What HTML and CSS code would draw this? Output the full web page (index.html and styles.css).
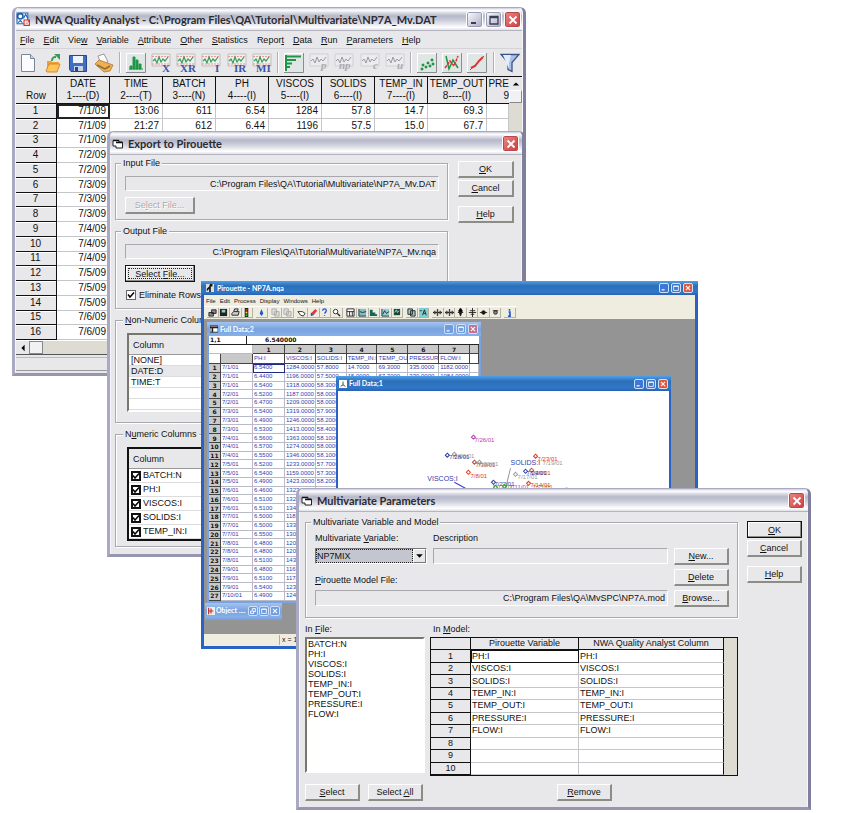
FILE: index.html
```html
<!DOCTYPE html>
<html lang="en">
<head>
<meta charset="utf-8">
<title>NWA Quality Analyst</title>
<link rel="stylesheet" href="styles.css">
</head>
<body>
<svg class="defs" aria-hidden="true">
  <symbol id="x" viewBox="0 0 10 10"><path d="M1.5 1.5l7 7M8.5 1.5l-7 7" stroke="currentColor" stroke-width="1.8"/></symbol>
  <symbol id="min" viewBox="0 0 10 10"><path d="M1 8h5" stroke="currentColor" stroke-width="2"/></symbol>
  <symbol id="max" viewBox="0 0 10 10"><path d="M1 1.500h8v7.500h-8zM1 2.500h8" fill="none" stroke="currentColor" stroke-width="1.300"/></symbol>
  <symbol id="form" viewBox="0 0 12 12"><path d="M1 2.500h6v1.500h3.500v6H4V8H1z" fill="#fff" stroke="#222"/><path d="M1 2.500h6M4 4.500h6" stroke="#111" stroke-width="1.500"/></symbol>
  <symbol id="chart" viewBox="0 0 20 20"><path d="M1 1h18v12H1z" fill="#eef0ee" stroke="#bcbfc0"/><path d="M1 3.500h18M1 11h18" stroke="#e99" stroke-dasharray="2 1"/><path d="M2 8l2-2 2 4 2-6 2 5 2-3 2 2 3-4" fill="none" stroke="#3a9a5a" stroke-width="1.200"/></symbol>
  <symbol id="gchart" viewBox="0 0 20 20"><path d="M1 1h18v12H1z" fill="#ececee" stroke="#d0d0d3"/><path d="M2 8l2-2 2 4 2-6 2 5 2-3 2 2 3-4" fill="none" stroke="#9a9a9e"/></symbol>
  <symbol id="tile" viewBox="0 0 20 20"><path d="M0 0h19v19H0z" fill="#fff"/><path d="M1 1h18v18H1z" fill="#dfe6e4"/><path d="M19.500 0v19.500H0" fill="none" stroke="#8a8d90"/></symbol>
  <symbol id="arrows" viewBox="0 0 10 10"><path d="M0 5h10" stroke="#222" stroke-width="1.500"/><path d="M5 1v8M2 3v4M8 3v4" stroke="#444" stroke-width="1.500"/></symbol>
</svg>
<main class="desktop">

<section class="win silver analyst">
  <header class="caption">
    <svg class="app" viewBox="0 0 14 14"><path d="M1 1h10v10H1z" fill="#fff" stroke="#2a6ea8"/><circle cx="4" cy="4" r="2.500" fill="none" stroke="#1c5fb0" stroke-width="1.500"/><path d="M7 6l2-4 2 4M2 10l2-2 2 2" fill="none" stroke="#1c5fb0"/><path d="M7 7h6v6H7z" fill="#d42020"/><path d="M11.500 8.500h-3v3h3v-1.500h-2.500" fill="none" stroke="#fff"/></svg>
    <h1>NWA Quality Analyst - C:\Program Files\QA\Tutorial\Multivariate\NP7A_Mv.DAT</h1>
    <button class="cap" aria-label="Minimize"><svg><use href="#min"/></svg></button><button class="cap" aria-label="Maximize"><svg><use href="#max"/></svg></button><button class="cap close" aria-label="Close"><svg><use href="#x"/></svg></button>
  </header>
  <nav class="menu"><a href="#"><u>F</u>ile</a><a href="#"><u>E</u>dit</a><a href="#">Vie<u>w</u></a><a href="#"><u>V</u>ariable</a><a href="#"><u>A</u>ttribute</a><a href="#"><u>O</u>ther</a><a href="#"><u>S</u>tatistics</a><a href="#">Repor<u>t</u></a><a href="#"><u>D</u>ata</a><a href="#"><u>R</u>un</a><a href="#"><u>P</u>arameters</a><a href="#"><u>H</u>elp</a></nav>
  <div class="tools">
    <button aria-label="New"><svg viewBox="0 0 20 20"><path d="M3.500 1.500h9l4 4v13h-13z" fill="#fbfcff" stroke="#7b8798"/><path d="M12.500 1.500v4h4" fill="#cdd8e8" stroke="#7b8798"/></svg></button>
    <button aria-label="Open"><svg viewBox="0 0 20 20"><path d="M4 8h4l1 1h7l-2 10H4z" fill="#f0a030"/><path d="M3 18l3-7h11l-3 8H4z" fill="#fcc45c" stroke="#d98a20"/><path d="M9 8c0-4 2-4 4-4" fill="none" stroke="#3a9a5a" stroke-width="2"/><path d="M11 1h6v6z" fill="#3a9a5a"/></svg></button>
    <button aria-label="Save"><svg viewBox="0 0 20 20"><path d="M1.500 2.500h17v16H3l-1.500-2z" fill="#3f6fc4" stroke="#28488c"/><path d="M5 3h10v7H5z" fill="#eef3fb"/><path d="M6 13h9v5H6z" fill="#c9d3e4"/><path d="M7 14h3v4H7z" fill="#28488c"/></svg></button>
    <button aria-label="Print"><svg viewBox="0 0 20 20"><path d="M4 3l6-2 4 8-7 2z" fill="#fff" stroke="#999"/><path d="M1 11l4-4 14 5-3 6-6 1z" fill="#f0b050" stroke="#b98a48"/><path d="M3 12l8 4 5-3" stroke="#8b6a40" fill="none" stroke-width="1.500"/></svg></button>
    <i></i>
    <button aria-label="Histogram"><svg viewBox="0 0 20 20"><use href="#tile"/><path d="M3 16h14M4 16v-3h2v3zM7 16V4h2v12zM10 16V7h2v9zM13 16v-5h2v5z" fill="#1e9648" stroke="#1e9648"/></svg></button>
    <button aria-label="X chart"><svg viewBox="0 0 20 20"><use href="#chart"/><text x="11" y="19">X</text></svg></button>
    <button aria-label="XR chart"><svg viewBox="0 0 20 20"><use href="#chart"/><text x="4" y="19">XR</text></svg></button>
    <button aria-label="I chart"><svg viewBox="0 0 20 20"><use href="#chart"/><text x="14" y="19">I</text></svg></button>
    <button aria-label="IR chart"><svg viewBox="0 0 20 20"><use href="#chart"/><text x="7" y="19">IR</text></svg></button>
    <button aria-label="MI chart"><svg viewBox="0 0 20 20"><use href="#chart"/><text x="4" y="19">MI</text></svg></button>
    <i></i>
    <button aria-label="Pareto"><svg viewBox="0 0 20 20"><use href="#tile"/><path d="M2 2v16M3 3.500h14M3 7h9M3 10.500h5M3 14h3" stroke="#1e9648" stroke-width="2"/></svg></button>
    <button aria-label="p chart"><svg class="off" viewBox="0 0 20 20"><use href="#gchart"/><text x="12" y="16">p</text></svg></button>
    <button aria-label="np chart"><svg class="off" viewBox="0 0 20 20"><use href="#gchart"/><text x="5" y="16">np</text></svg></button>
    <button aria-label="c chart"><svg class="off" viewBox="0 0 20 20"><use href="#gchart"/><text x="13" y="16">c</text></svg></button>
    <button aria-label="u chart"><svg class="off" viewBox="0 0 20 20"><use href="#gchart"/><text x="12" y="16">u</text></svg></button>
    <i></i>
    <button aria-label="Scatter"><svg viewBox="0 0 20 20"><use href="#tile"/><path d="M4 15h2v2H4zM5 11h2v2H5zM8 13h2v2H8zM10 9h2v2h-2zM12 12h2v2h-2zM14 6h2v2h-2zM15 10h2v2h-2z" fill="#1e9648" stroke="#1e9648" stroke-width=".6"/></svg></button>
    <button aria-label="Multi scatter"><svg viewBox="0 0 20 20"><use href="#tile"/><path d="M4 3l3 13 4-9 5 8" fill="none" stroke="#1e9648" stroke-width="1.500"/><path d="M3 15l5-7 4 5 4-10" fill="none" stroke="#d33" stroke-width="1.500" stroke-dasharray="3 1"/></svg></button>
    <button aria-label="Probability"><svg viewBox="0 0 20 20"><use href="#tile"/><path d="M3 17L17 3" stroke="#1e9648"/><path d="M4 15l4-2 4-5 4-4" fill="none" stroke="#d33" stroke-width="2"/></svg></button>
    <i></i>
    <button aria-label="Filter"><svg viewBox="0 0 20 20"><path d="M1 1.500h18l-7 8v9l-4-2v-7z" fill="#a9c0e8" stroke="#3a5488" stroke-width="1.300"/><path d="M3 2h8l-2 8v6z" fill="#e3ecfa"/></svg></button>
  </div>
  <div class="gridwrap">
    <table class="data">
      <colgroup><col class="c-row"><col class="c"><col class="c"><col class="c"><col class="c"><col class="c"><col class="c"><col class="c"><col class="c-out"><col></colgroup>
      <thead><tr><th><br>Row<th>DATE<br>1----(D)<th>TIME<br>2----(T)<th>BATCH<br>3----(N)<th>PH<br>4----(I)<th>VISCOS<br>5----(I)<th>SOLIDS<br>6----(I)<th>TEMP_IN<br>7----(I)<th>TEMP_OUT<br>8----(I)<th class="cut">PRE<br>9</tr></thead>
      <tbody>
      <tr><th>1<td class="cur">7/1/09<td>13:06<td>611<td>6.54<td>1284<td>57.8<td>14.7<td>69.3<td>
      <tr><th>2<td>7/1/09<td>21:27<td>612<td>6.44<td>1196<td>57.5<td>15.0<td>67.7<td>
      <tr><th>3<td>7/1/09<td colspan="8">
      <tr><th>4<td>7/2/09<td colspan="8">
      <tr><th>5<td>7/2/09<td colspan="8">
      <tr><th>6<td>7/3/09<td colspan="8">
      <tr><th>7<td>7/3/09<td colspan="8">
      <tr><th>8<td>7/3/09<td colspan="8">
      <tr><th>9<td>7/4/09<td colspan="8">
      <tr><th>10<td>7/4/09<td colspan="8">
      <tr><th>11<td>7/4/09<td colspan="8">
      <tr><th>12<td>7/5/09<td colspan="8">
      <tr><th>13<td>7/5/09<td colspan="8">
      <tr><th>14<td>7/5/09<td colspan="8">
      <tr><th>15<td>7/6/09<td colspan="8">
      <tr><th>16<td>7/6/09<td colspan="8">
      </tbody>
    </table>
    <div class="vbar"><button aria-label="Scroll up"><svg viewBox="0 0 10 10"><path d="M1 7l4-4 4 4z"/></svg></button><b></b></div>
  </div>
  <div class="hbar"><button aria-label="Scroll left"><svg viewBox="0 0 10 10"><path d="M7 1L3 5l4 4z"/></svg></button><b></b></div>
  <footer></footer>
</section>

<section class="win silver export">
  <header class="caption"><svg class="form"><use href="#form"/></svg><h2>Export to Pirouette</h2><button class="cap close" aria-label="Close"><svg><use href="#x"/></svg></button></header>
  <div class="cols">
    <div class="groups">
      <fieldset><legend>Input File</legend>
        <input class="path" readonly aria-label="Input file" value="C:\Program Files\QA\Tutorial\Multivariate\NP7A_Mv.DAT">
        <button class="btn wide" disabled>Se<u>l</u>ect File...</button>
      </fieldset>
      <fieldset class="g2"><legend>Output File</legend>
        <input class="path" readonly aria-label="Output file" value="C:\Program Files\QA\Tutorial\Multivariate\NP7A_Mv.nqa">
        <button class="btn wide default focus">Select <u>F</u>ile...</button>
        <label class="tick"><input type="checkbox" checked>Eliminate Rows</label>
      </fieldset>
      <fieldset class="g3"><legend><u>N</u>on-Numeric Columns</legend>
        <table class="list"><tr><th>Column<tr><td>[NONE]<tr class="sel"><td>DATE:D<tr><td>TIME:T<tr><td><tr><td></table>
      </fieldset>
      <fieldset class="g4"><legend>N<u>u</u>meric Columns</legend>
        <table class="list checks"><tr><th>Column<tr><td><label><input type="checkbox" checked>BATCH:N</label><tr><td><label><input type="checkbox" checked>PH:I</label><tr><td><label><input type="checkbox" checked>VISCOS:I</label><tr><td><label><input type="checkbox" checked>SOLIDS:I</label><tr><td><label><input type="checkbox" checked>TEMP_IN:I</label></table>
      </fieldset>
    </div>
    <div class="acts"><button class="btn"><u>O</u>K</button><button class="btn"><u>C</u>ancel</button><button class="btn apart"><u>H</u>elp</button></div>
  </div>
</section>

<section class="win blue pirouette">
  <header class="bar"><svg class="mini" viewBox="0 0 10 10"><path d="M0 0h10v10H0z" fill="#ddd"/><path d="M5 0h3v3H6v7H4V6L1 9V6l3-3z" fill="#111"/></svg><h2>Pirouette - NP7A.nqa</h2><button class="wb" aria-label="Minimize"><svg><use href="#min"/></svg></button><button class="wb" aria-label="Maximize"><svg><use href="#max"/></svg></button><button class="wb red" aria-label="Close"><svg><use href="#x"/></svg></button></header>
  <nav class="pmenu"><a href="#">File</a><a href="#">Edit</a><a href="#">Process</a><a href="#">Display</a><a href="#">Windows</a><a href="#">Help</a></nav>
  <div class="ptools">
    <button aria-label="Open"><svg viewBox="0 0 10 10"><path d="M1 5h5v4H1zM4 2h5v4H4z" fill="#889" stroke="#222"/></svg></button><button aria-label="Save"><svg viewBox="0 0 10 10"><path d="M1 1h8v8H1z" fill="#222"/><path d="M3 2h4v3H3z" fill="#8cc"/></svg></button><button aria-label="Print"><svg viewBox="0 0 10 10"><path d="M1 6l2-2h6L8 8H1zM3 4l1-3h4L7 4" fill="#ccc" stroke="#222"/></svg></button><button aria-label="Run"><svg viewBox="0 0 10 10"><path d="M3 0h4v10H3z" fill="#222"/><path d="M4 1h2v2H4z" fill="#e22"/><path d="M4 4h2v2H4z" fill="#fd2"/><path d="M4 7h2v2H4z" fill="#2c2"/></svg></button>
    <button class="s" aria-label="Drop"><svg viewBox="0 0 10 10"><path d="M5 1l2 5-2 3-2-3z" fill="#25c"/></svg></button>
    <button class="s" aria-label="Copy"><svg viewBox="0 0 10 10"><path d="M1 1h5v6H1zM4 4h5v5H4z" fill="#ddd" stroke="#aaa"/></svg></button><button aria-label="Paste"><svg viewBox="0 0 10 10"><path d="M1 1h5v6H1zM4 4h5v5H4z" fill="#ddd" stroke="#aaa"/></svg></button>
    <button class="s" aria-label="Point"><svg viewBox="0 0 10 10"><path d="M1 4h5l3 2-2 3-3-1z" fill="#fff" stroke="#222"/></svg></button><button aria-label="Spin"><svg viewBox="0 0 10 10"><path d="M7 1l2 2-4 5-3-2z" fill="#e33"/><path d="M2 5l3 3-3 1z" fill="#24b"/></svg></button><button aria-label="Help"><svg viewBox="0 0 10 10"><path d="M3 3q0-2 2-2t2 2q0 1-2 3M5 8v1" fill="none" stroke="#25c" stroke-width="1.500"/></svg></button><button aria-label="Zoom"><svg viewBox="0 0 10 10"><circle cx="4" cy="4" r="2.500" fill="#fff" stroke="#222"/><path d="M6 6l3 3" stroke="#222" stroke-width="1.500"/></svg></button>
    <button class="s" aria-label="Table"><svg viewBox="0 0 10 10"><path d="M1 1h8v8H1zM1 4h8M4 4v5M7 4v5" fill="#fff" stroke="#222"/></svg></button><button aria-label="Line plot"><svg viewBox="0 0 10 10"><path d="M1 1h8v8H1z" fill="#8bb"/><path d="M1 1v8h8M2 4l3 1 4-1" fill="none" stroke="#134"/></svg></button><button aria-label="Bars"><svg viewBox="0 0 10 10"><path d="M1 2h3v3h3v2h2v2H1z" fill="#165"/></svg></button><button aria-label="Curve"><svg viewBox="0 0 10 10"><path d="M1 1h8v8H1z" fill="#9cc"/><path d="M1 1v8h8M2 7l2-4 2 3 3-2" fill="none" stroke="#134"/></svg></button><button aria-label="Multi plot"><svg viewBox="0 0 10 10"><path d="M2 1h7v7H2z" fill="#243"/><path d="M3 5l2-3 1 3 2-2" fill="none" stroke="#8ee"/></svg></button>
    <button class="s" aria-label="Clone"><svg viewBox="0 0 10 10"><path d="M1 1h5v6H1zM4 3h5v6H4z" fill="#9cc" stroke="#222"/></svg></button><button aria-label="Labels"><svg viewBox="0 0 10 10"><path d="M0 0h10v10H0z" fill="#7fd0d0"/><path d="M4 8l2-6 2 6M5 6h2M1 3h2" stroke="#222" fill="none"/></svg></button>
    <button class="s" aria-label="Left"><svg><use href="#arrows"/></svg></button><button aria-label="Right"><svg><use href="#arrows"/></svg></button><button aria-label="Up"><svg viewBox="0 0 10 10"><path d="M5 0l2 3-2 6-2-6zM2 5h6" stroke="#222"/></svg></button><button aria-label="Down"><svg viewBox="0 0 10 10"><path d="M5 0v10M2 3h6M1 5h8M3 7h4" stroke="#222"/></svg></button><button aria-label="Rotate"><svg viewBox="0 0 10 10"><circle cx="5" cy="5" r="2" stroke="#222"/><path d="M1 5h8" stroke="#222"/></svg></button><button aria-label="Rotate back"><svg viewBox="0 0 10 10"><circle cx="5" cy="5" r="2" fill="#888" stroke="#222"/><path d="M2 3h6" stroke="#222"/></svg></button>
    <button class="s" aria-label="Info"><svg viewBox="0 0 10 10"><path d="M5 1v2M4 4.500h1.500V9M3.500 9h3" stroke="#25c" fill="none" stroke-width="1.800"/></svg></button>
  </div>
  <div class="mdi">
    <section class="child sheet">
      <header class="bar pale"><svg class="mini" viewBox="0 0 10 10"><path d="M0 1h10v8H0z" fill="#fff" stroke="#222"/><path d="M0 3h10M3 3v6" stroke="#222" stroke-width="2"/></svg><h3>Full Data;2</h3><button class="wb" aria-label="Minimize"><svg><use href="#min"/></svg></button><button class="wb" aria-label="Maximize"><svg><use href="#max"/></svg></button><button class="wb red" aria-label="Close"><svg><use href="#x"/></svg></button></header>
      <div class="cellbar"><span>1,1</span><span></span><b>6.540000</b></div>
      <table>
        <colgroup><col class="p-n"><col class="p-d"><col class="p-h"><col><col><col><col><col><col><col class="p-e"></colgroup>
        <thead><tr><td colspan="2"><th>1<th>2<th>3<th>4<th>5<th>6<th>7<th></tr>
        <tr class="names"><td><th><td>PH:I<td>VISCOS:I<td>SOLIDS:I<td>TEMP_IN:I<td>TEMP_OU<td>PRESSUR<td>FLOW:I<td></tr></thead>
        <tbody>
        <tr><th>1<td>7/1/01<td class="cur">6.5400<td>1284.0000<td>57.8000<td>14.7000<td>69.3000<td>335.0000<td>1182.0000<td>
        <tr><th>2<td>7/1/01<td>6.4400<td>1196.0000<td>57.5000<td>15.0000<td>67.7000<td>330.0000<td>1084.0000<td>
        <tr><th>3<td>7/1/01<td>6.5400<td>1318.0000<td>58.3000<td colspan="5">
        <tr><th>4<td>7/2/01<td>6.5200<td>1187.0000<td>58.0000<td colspan="5">
        <tr><th>5<td>7/2/01<td>6.4700<td>1209.0000<td>58.0000<td colspan="5">
        <tr><th>6<td>7/3/01<td>6.5400<td>1319.0000<td>57.9000<td colspan="5">
        <tr><th>7<td>7/3/01<td>6.4900<td>1246.0000<td>58.2000<td colspan="5">
        <tr><th>8<td>7/3/01<td>6.5300<td>1413.0000<td>58.4000<td colspan="5">
        <tr><th>9<td>7/4/01<td>6.5600<td>1363.0000<td>58.1000<td colspan="5">
        <tr><th>10<td>7/4/01<td>6.5700<td>1274.0000<td>58.0000<td colspan="5">
        <tr><th>11<td>7/4/01<td>6.5500<td>1346.0000<td>58.1000<td colspan="5">
        <tr><th>12<td>7/5/01<td>6.5200<td>1233.0000<td>57.7000<td colspan="5">
        <tr><th>13<td>7/5/01<td>6.5400<td>1159.0000<td>57.3000<td colspan="5">
        <tr><th>14<td>7/5/01<td>6.4900<td>1423.0000<td>58.2000<td colspan="5">
        <tr><th>15<td>7/6/01<td>6.4600<td>1323<td colspan="6">
        <tr><th>16<td>7/6/01<td>6.5100<td>1328<td colspan="6">
        <tr><th>17<td>7/6/01<td>6.5100<td>1344<td colspan="6">
        <tr><th>18<td>7/7/01<td>6.5000<td>1181<td colspan="6">
        <tr><th>19<td>7/7/01<td>6.5000<td>1332<td colspan="6">
        <tr><th>20<td>7/7/01<td>6.5500<td>1303<td colspan="6">
        <tr><th>21<td>7/8/01<td>6.4800<td>1202<td colspan="6">
        <tr><th>22<td>7/8/01<td>6.4800<td>1204<td colspan="6">
        <tr><th>23<td>7/8/01<td>6.5100<td>1436<td colspan="6">
        <tr><th>24<td>7/9/01<td>6.4800<td>1163<td colspan="6">
        <tr><th>25<td>7/9/01<td>6.5100<td>1178<td colspan="6">
        <tr><th>26<td>7/9/01<td>6.5400<td>1236<td colspan="6">
        <tr><th>27<td>7/10/01<td>6.4900<td>1247<td colspan="6">
        </tbody>
      </table>
    </section>
    <section class="child object">
      <header class="bar pale"><svg class="mini" viewBox="0 0 10 10"><path d="M0 0h10v10H0z" fill="#eee"/><path d="M2 1v8M5 2v6M2 5h6" stroke="#b33" stroke-width="1.500"/></svg><h3>Object ....</h3><button class="wb" aria-label="Restore"><svg viewBox="0 0 10 10"><path d="M1 5h5v4H1zM4 4V1h5v5H6" fill="none" stroke="currentColor" stroke-width="1.500"/></svg></button><button class="wb" aria-label="Maximize"><svg><use href="#max"/></svg></button><button class="wb" aria-label="Close"><svg><use href="#x"/></svg></button></header>
    </section>
    <section class="child plot">
      <header class="bar"><svg class="mini" viewBox="0 0 10 10"><path d="M0 0h10v10H0z" fill="#fff"/><path d="M5 2v4L2 8M5 6l3 2" stroke="#222" fill="none"/></svg><h3>Full Data;1</h3><button class="wb" aria-label="Minimize"><svg><use href="#min"/></svg></button><button class="wb" aria-label="Maximize"><svg><use href="#max"/></svg></button><button class="wb red" aria-label="Close"><svg><use href="#x"/></svg></button></header>
      <svg class="cloud" viewBox="338 390 330 98">
        <g fill="none"><path d="M454 481l11 6" stroke="#3344bb"/><path d="M510 467l-5 20" stroke="#999"/><path d="M565 486l4 2" stroke="#ccc"/></g>
        <g class="big"><text x="427" y="480">VISCOS:I</text><text x="510" y="464">SOLIDS:I</text></g>
        <g class="grey"><text x="454" y="457">7/20/01</text><path d="M454 451l2 2-2 2-2-2z"/><text x="478" y="465">7/30/01</text><text x="542" y="464">7/19/01</text><text x="517" y="478">7/17/01</text><path d="M515 471l2 2-2 2-2-2zM479 459l2 2-2 2-2-2z"/></g>
        <g class="brown"><text x="475" y="466">7/30/01</text><path d="M474 459l2 2-2 2-2-2zM531 467l2 2-2 2-2-2z"/><text x="530" y="474">7/20/01</text></g>
        <g class="navy"><text x="449" y="458">7/28/01</text><path d="M447 452l2 2-2 2-2-2zM493 479l2 2-2 2-2-2zM525 468l2 2-2 2-2-2z"/><text x="526" y="474">7/24/01</text><text x="494" y="485">7/22/01</text></g>
        <g class="green"><text x="492" y="488">7/12/01</text><text x="532" y="488">7/21/01</text><path d="M495 484l2 2-2 2-2-2zM504 483l2 2-2 2-2-2z"/></g>
        <g class="purple"><path d="M473 434l2 2-2 2-2-2z"/><text x="474" y="441">7/26/01</text><text x="509" y="488">7/11/01</text></g>
        <g class="red"><path d="M535 453l2 2-2 2-2-2zM468 469l2 2-2 2-2-2zM528 480l2 2-2 2-2-2z"/><text x="537" y="460">7/23/01</text><text x="470" y="477">7/8/01</text><text x="530" y="486">7/14/01</text></g>
      </svg>
    </section>
  </div>
  <footer class="status"><span></span><span>x = 1</span></footer>
</section>

<section class="win silver params">
  <header class="caption"><svg class="form"><use href="#form"/></svg><h2>Multivariate Parameters</h2><button class="cap close" aria-label="Close"><svg><use href="#x"/></svg></button></header>
  <div class="cols">
    <fieldset><legend>Multivariate Variable and Model</legend>
      <div class="form-grid">
        <label class="l1" for="mv">Multivariate <u>V</u>ariable:</label><label class="l2" for="desc">Description</label>
        <div class="combo"><select id="mv"><option>NP7MIX</option></select><svg viewBox="0 0 10 10"><path d="M2 3.500h6L5 6.500z"/></svg></div>
        <input id="desc" class="path" readonly><button class="btn"><u>N</u>ew...</button>
        <label class="l3" for="mf"><u>P</u>irouette Model File:</label><button class="btn"><u>D</u>elete</button>
        <input id="mf" class="path long" readonly value="C:\Program Files\QA\MvSPC\NP7A.mod"><button class="btn"><u>B</u>rowse...</button>
      </div>
    </fieldset>
    <div class="acts"><button class="btn default"><u>O</u>K</button><button class="btn"><u>C</u>ancel</button><button class="btn apart"><u>H</u>elp</button></div>
  </div>
  <div class="pair">
    <div class="infile"><label for="inf">In <u>F</u>ile:</label>
      <select id="inf" size="8"><option>BATCH:N</option><option>PH:I</option><option>VISCOS:I</option><option>SOLIDS:I</option><option>TEMP_IN:I</option><option>TEMP_OUT:I</option><option>PRESSURE:I</option><option>FLOW:I</option></select></div>
    <div class="inmodel"><span>In <u>M</u>odel:</span>
      <div class="modelwrap"><table>
        <colgroup><col class="m-n"><col class="m-v"><col></colgroup>
        <tr><th><th>Pirouette Variable<th>NWA Quality Analyst Column
        <tr><th>1<td class="cur">PH:I<td>PH:I
        <tr><th>2<td>VISCOS:I<td>VISCOS:I
        <tr><th>3<td>SOLIDS:I<td>SOLIDS:I
        <tr><th>4<td>TEMP_IN:I<td>TEMP_IN:I
        <tr><th>5<td>TEMP_OUT:I<td>TEMP_OUT:I
        <tr><th>6<td>PRESSURE:I<td>PRESSURE:I
        <tr><th>7<td>FLOW:I<td>FLOW:I
        <tr><th>8<td><td>
        <tr><th>9<td><td>
        <tr><th>10<td><td>
      </table><i></i></div></div>
  </div>
  <div class="foot"><button class="btn"><u>S</u>elect</button><button class="btn">Select <u>A</u>ll</button><button class="btn remove"><u>R</u>emove</button></div>
</section>
</main>
</body>
</html>
```
FILE: styles.css
```css
*{box-sizing:border-box}
body{margin:0;background:#fff;color:#111;font:9px/12px "Liberation Sans",Arial,sans-serif}
h1,h2,h3{margin:0;font-weight:inherit;font-size:inherit;flex:1;white-space:nowrap;min-width:0}
button,input,select{font:inherit;color:inherit;margin:0;padding:0;border:0;background:none;border-radius:0}
a{color:inherit;text-decoration:none}
table{border-collapse:separate;border-spacing:0;table-layout:fixed}
th,td{padding:0;font-weight:400;overflow:hidden;white-space:nowrap}
svg{display:block}
.defs{position:absolute;width:0;height:0}
.desktop{position:relative;min-height:100vh;overflow:hidden}

/* windows */
.win{position:absolute;display:flex;flex-direction:column}
.silver{background:#e8e8eb;border:3px solid #a9a9c3;border-top-width:1px;border-right-color:#80809e;border-bottom-color:#9696b2;border-radius:6px 6px 0 0;box-shadow:inset 1px 0 #f6f6fa,inset -1px 0 #f6f6fa}
.analyst{left:12px;top:7px;width:514px;height:369px;padding:0 1px}
.export{left:107px;top:131px;width:418px;height:426px}
.pirouette{left:201px;top:281px;width:497px;height:368px}
.params{left:296px;top:488px;width:515px;height:322px}
.caption{display:flex;align-items:center;flex:none;height:23px;gap:2px;padding:1px 3px 0 2px;border-bottom:1px solid #b4b4bf;border-radius:5px 5px 0 0;background:linear-gradient(#c9c9dc 0,#fff 10%,#dfe0e8 20%,#b6b8ca 36%,#c9cbd8 55%,#fff 88%,#e0e0e8 100%);font:700 11px/16px Lato,sans-serif;color:#2b2b30}
.caption h1,.caption h2{padding-left:2px}
.analyst .caption{padding:1px 1px 0 0}
.app,.form,.cap,.mini,.wb{flex:none}
.app{width:15px;height:15px}
.form{width:12px;height:12px}
.cap{width:17px;height:17px;border:1px solid #fff;border-radius:3px;background:linear-gradient(135deg,#fdfdff,#a9acc4);color:#3c3e58;display:grid;place-items:center;box-shadow:0 0 0 1px #9b9db5 inset}
.cap svg{width:10px;height:10px}
.cap.close{color:#fff;background:linear-gradient(135deg,#e88a84,#cf3a3c);box-shadow:0 0 0 1px #b8484c inset}

/* main window */
.menu{display:flex;gap:9px;height:17px;padding:0 4px;align-items:center}
.tools{display:flex;align-items:center;height:28px;padding:0 2px;border-top:1px solid #d4d4d8;justify-content:space-between}
.tools button{width:20px;height:20px}
.tools svg{width:20px;height:20px}
.tools i{width:2px;height:21px;border-left:1px solid #b0b0b6;border-right:1px solid #fff}
.tools text{font:bold 11px "Liberation Serif",serif;fill:#3c56a8}
.tools .off text{font-style:italic;fill:#aaaab0}
.gridwrap{display:flex;height:265px;border-top:1px solid #111;background:#fff;overflow:hidden}
.data{flex:1;min-width:0;height:263px;font-size:10px;line-height:12px}
.data .c-row{width:41px}
.data .c{width:53px}
.data .c-out{width:59px}
.data thead{height:27px}
.data th{background:#e8e8eb;border-right:1px solid #111;border-bottom:1px solid #111}
.data tbody th{box-shadow:inset 0 1px #fff;padding-right:1px}
.data td{text-align:right;padding-right:3px;border-right:1px solid #c6c6ca;border-bottom:1px solid #c6c6ca}
.data .cur{outline:2px solid #222;outline-offset:-2px}
.data .cut{text-align:right;border-right:0}
.vbar{width:13px;background:#dedbd3}
.vbar button,.hbar button{width:13px;height:13px;background:#e8e8eb;display:grid;place-items:center}
.vbar svg,.hbar svg{width:8px;height:8px}
.vbar b{display:block;height:13px;background:#f1f1f3;border:1px solid #fff;border-right-color:#888;border-bottom-color:#888}
.hbar{display:flex;height:14px;background:#dedbd3;border-bottom:1px solid #555}
.hbar b{width:14px;background:#f1f1f3;border:1px solid #888}
.analyst footer{flex:1;margin:2px 0;border-top:1px solid #bbb;border-bottom:1px solid #999}

/* form parts */
fieldset{margin:0;padding:7px 9px 5px;border:1px solid #a9a9ad;box-shadow:1px 1px #fff,inset 1px 1px #fff;min-width:0}
legend{padding:0 2px;margin-left:-4px;line-height:12px;background:#e8e8eb}
.path{display:block;width:100%;height:16px;border:1px solid #a9a9ad;border-right-color:#fff;border-bottom-color:#fff;text-align:right;padding:0 2px 0 0}
.btn{height:17px;width:55px;background:#e8e8eb;border:1px solid #fff;border-right:2px solid #8d8d88;border-bottom:2px solid #8d8d88;line-height:12px;white-space:nowrap}
.btn.wide{width:70px;margin-top:6px}
.btn:disabled{color:#aaaaae;text-shadow:1px 1px #fff}
.btn.default{border:1px solid #111;box-shadow:inset -1px -1px #8d8d88,inset 1px 1px #fff}
.focus{outline:1px dotted #222;outline-offset:-4px}
.cols{display:flex}
.acts{display:flex;flex-direction:column;gap:2px}
.acts .apart{margin-top:7px}
input[type=checkbox]{appearance:none;width:10px;height:10px;border:1px solid #666;background:#fff url('data:image/svg+xml,<svg xmlns="http://www.w3.org/2000/svg" viewBox="0 0 8 8"><path d="M1 3.500l2 2.500 4-4.500" fill="none" stroke="black" stroke-width="1.500"/></svg>') center/8px no-repeat}

/* export dialog */
.export .cols{padding:2px 8px 0 5px;justify-content:space-between}
.export .acts .btn{width:56px}
.groups{width:333px;display:flex;flex-direction:column;gap:5px}
.groups .path{width:314px;height:15px}
.tick{display:flex;align-items:center;gap:3px;margin-top:7px;padding-left:1px}
.g2{padding-bottom:7px}
.g3,.g4{padding-left:11px}
.g3{padding-bottom:10px}
.list{width:300px;border:2px solid #77776f;border-right-color:#fff;border-bottom-color:#fff;background:#fff}
.list th{text-align:left;height:20px;background:#e8e8eb;border-bottom:1px solid #999;padding-left:4px}
.list td{height:11px;line-height:10px;border-bottom:1px solid #dcdcde;padding-left:2px}
.list .sel td{background:#e8e8eb}
.checks{border-color:#111}
.checks td{height:14px;line-height:13px}
.checks label{display:flex;align-items:center;gap:2px}
.checks input{border:2px solid #111}
.export .acts{padding-top:4px}

/* pirouette */
.blue{border:3px solid #2a62c4;border-top:0;background:#efede0;font-size:6px;line-height:8px}
.bar{display:flex;align-items:center;gap:2px;height:14px;margin:0 -3px;padding:0 5px;background:linear-gradient(#4f9fe8,#2c6fb8 35%,#2f78c8 80%,#2a5fb4);color:#fff;font:bold 7px/9px Lato,sans-serif}
.bar h2{padding-left:1px}
.mini{width:8px;height:8px}
.wb{width:10px;height:10px;border:1px solid #cfe0fa;border-radius:2px;background:#3d78d8;color:#fff;display:grid;place-items:center}
.wb svg{width:6px;height:6px}
.wb.red{background:#e2553a}
.pmenu{display:flex;gap:4px;padding:0 2px;height:11px;align-items:center}
.ptools{display:flex;width:312px;height:13px;padding:1px 0 1px 3px;border-top:1px solid #fff}
.ptools button{flex:1;border-right:1px solid #b5b2a4;border-bottom:1px solid #b5b2a4;display:grid;place-items:center}
.ptools .s{margin-left:3px}
.ptools svg{width:9px;height:9px}
.mdi{position:relative;flex:1;background:#949494;overflow:hidden}
.child{position:absolute;background:#fff;border:2px solid #7ba3e2;border-top:0}
.child .bar{margin:0 -2px;padding:0 3px}
.child .pale{background:linear-gradient(#a3c4f0,#7aa3df 50%,#86b0e8)}
.pale .wb{background:#6f9ce0}
.pale .wb.red{background:#c0708c}
.sheet{left:3px;top:3px;width:274px}
.cellbar{display:flex;height:9px;border-bottom:1px solid #222;font:bold 6px/8px "DejaVu Sans",sans-serif}
.cellbar span{width:38px;border-right:1px solid #222;padding-left:1px}
.cellbar span+span{width:18px;border:0}
.sheet table{width:100%;height:256px}
.p-n{width:12px}.p-d{width:32px}.p-h{width:32px}.p-e{width:9px}
.sheet td{color:#3440b0;border-right:1px solid #b9bcc8;border-bottom:1px solid #b9bcc8;line-height:7px;padding-left:1px}
.sheet th{background:#c9c9c9;border-right:1px solid #444;border-bottom:1px solid #444;color:#111;font:bold 6px/7px "DejaVu Sans",sans-serif}
.sheet thead th,.sheet thead td{height:9px}
.sheet thead .names td{height:10px;border-color:#444}
.sheet .cur{outline:1px solid #222a80;outline-offset:-1px}
.object{left:1px;top:284px;width:77px}
.object .bar{height:15px;gap:1px;padding:0 2px}
.plot{left:132px;top:57px;width:335px;height:140px;border-color:#2a62c4}
.plot .bar{height:15px}
.cloud{width:100%;font-size:6px}
.cloud path{fill:none}
.big{fill:#3440b0;font-size:7px}
.grey{fill:#999}.grey path{stroke:#999}
.brown{fill:#a5524a}.brown path{stroke:#a5524a}
.navy{fill:#2c3ca8}.navy path{stroke:#2c3ca8}
.green{fill:#3a3}.green path{stroke:#3a3}
.purple{fill:#b43cae}.purple path{stroke:#b43cae}
.cloud .red{fill:#e23a22}.cloud .red path{stroke:#e23a22}
.status{display:flex;height:12px;padding:1px;font-size:7px;line-height:9px}
.status span:first-child{width:75px;border-right:1px solid #aaa}
.status span+span{padding-left:2px}

/* parameters dialog */
.params .cols{padding:4px 6px 0;justify-content:space-between}
.params fieldset{width:433px;padding:4px 8px 10px 9px}
.form-grid{display:grid;grid-template-columns:112px 1fr 55px;column-gap:6px;row-gap:4px}
.l2{grid-column:2/4}
.l3{grid-column:1/3;align-self:end}
.long{grid-column:1/3}
.combo{position:relative;height:16px;background:#fff;border:1px solid #777;border-right-color:#fff;border-bottom-color:#fff;display:flex}
.combo select{appearance:none;flex:1;background:#c3c6cf;outline:1px dotted #222;outline-offset:-1px;margin-right:13px;padding-left:1px}
.combo svg{position:absolute;right:0;top:0;width:13px;height:14px;background:#e8e8eb;border:1px solid #fff;border-right-color:#777;border-bottom-color:#777;pointer-events:none}
.params .acts{padding-top:5px}
.pair{display:flex;gap:5px;padding:5px 6px 0}
.infile{width:120px;display:flex;flex-direction:column;gap:2px}
.infile select{appearance:none;height:136px;background:#fff;border:2px solid #77776f;border-right-color:#fff;border-bottom-color:#fff;overflow:hidden}
.infile option{padding:0 0 0 1px;min-height:0;line-height:10px;height:10px}
.inmodel{width:308px;display:flex;flex-direction:column;gap:2px}
.inmodel>span{padding-left:3px}
.modelwrap{display:flex;border:1px solid #111;background:#fff}
.modelwrap i{width:13px;background:#dedbd3}
.modelwrap table{flex:1;min-width:0;height:137px;line-height:11px}
.m-n{width:40px}.m-v{width:108px}
.modelwrap th{background:#e8e8eb;border-right:1px solid #111;border-bottom:1px solid #111}
.modelwrap td{border-right:1px solid #c6c6ca;border-bottom:1px solid #c6c6ca;padding-left:1px}
.modelwrap td:last-child{border-right-color:#111}
.modelwrap .cur{outline:1px solid #111;outline-offset:-1px}
.foot{display:flex;gap:8px;padding:8px 6px 0}
.remove{margin-left:126px}
```
